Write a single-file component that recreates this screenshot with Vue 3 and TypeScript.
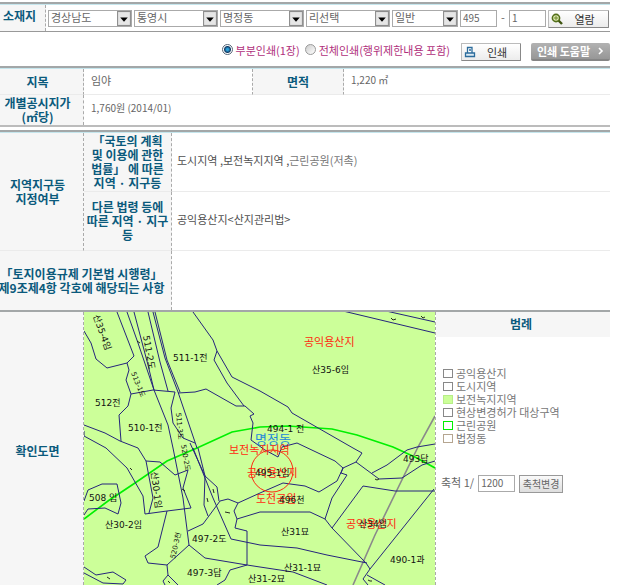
<script setup lang="ts">
import { ref } from 'vue'

interface MapLabel {
  text: string
  x: number
  y: number
  kind: 'lot' | 'zone' | 'district' | 'tiny'
  turn?: number
}

const regions = [
  { id: 'province', name: '시도', value: '경상남도' },
  { id: 'city', name: '시군구', value: '통영시' },
  { id: 'town', name: '읍면동', value: '명정동' },
  { id: 'village', name: '리', value: '리선택' },
  { id: 'kind', name: '구분', value: '일반' },
]

const mainNo = ref('495')
const subNo = ref('1')
const printMode = ref('part')
const scale = ref('1200')

const legend = [
  { name: '공익용산지', tone: 'plain' },
  { name: '도시지역', tone: 'plain' },
  { name: '보전녹지지역', tone: 'green-fill' },
  { name: '현상변경허가 대상구역', tone: 'plain' },
  { name: '근린공원', tone: 'green-line' },
  { name: '법정동', tone: 'tan-line' },
]

const parcels = [
  'M84 331L91 343L96 359L107 368L127 363L134 356L117 312',
  'M127 312L138 343L154 390L168 425L173 448L183 498L189 545L167 565L148 563L145 556L158 547L167 511',
  'M134 312L148 365L154 390',
  'M148 312L160 362L168 391',
  'M153 312L165 358L178 392L197 448',
  'M155 312L167 360L180 392',
  'M131 394L153 390L175 392L171 408L173 423L183 438L195 443',
  'M178 393L195 392L206 389L236 406L245 406L254 414L250 416L253 423L251 440L265 450L278 457L282 447L297 443L335 461L343 468L337 481L319 492L305 486L283 483L260 493L238 503L228 499L220 501L203 524L188 531',
  'M127 363L129 370L126 380L131 394L128 406L119 415L121 441',
  'M84 425L105 433L120 441L138 448L146 461L153 498L149 513',
  'M84 431L84 436L106 448L127 468L143 496L145 514L167 511L191 508L183 488L188 470L175 475L160 462L146 461',
  'M189 545L205 558L247 565L260 567L293 572L327 585',
  'M167 565L168 575L178 585M168 575L163 581L165 585',
  'M238 503L234 511L237 519L235 528L247 531L247 565L230 570L225 580L217 585',
  'M193 448L213 498L231 539L260 545L297 548L327 555L367 563',
  'M190 443L205 476L217 487L219 501M198 448L205 476L204 505L208 516',
  'M237 519L260 512L310 512L325 519L332 528L366 563L370 569L434 489',
  'M325 519L332 498L347 475L341 473L343 468L356 462L362 453L353 448L292 413L288 407L260 391L232 377L217 351L213 340L193 312',
  'M332 528L363 486L395 491L435 491',
  'M356 462L379 479L402 478L422 465L435 461',
  'M372 473L387 465L407 450L417 447L435 444',
  'M370 569L363 579L368 585M367 575L385 585',
  'M343 311L435 333M386 311L435 322',
  'M217 351L214 360L227 383L244 406',
  'M84 501L88 490L102 484L117 484L121 503L118 514L105 508L88 509L84 515',
  'M84 567L96 575L113 572L126 580L123 584L103 583L84 573',
]

const ticks =
  'M391 318l2 2l3-1M421 316l2 2l2-1M375 479l2 1l2-1M130 468l2 2M213 489l1 4M207 498l1 4M225 512l5 1M107 577l3 2M168 581l2 2M368 580l2 1l2 0M182 489l3 2M137 341l3 2'

const labels: MapLabel[] = [
  { text: '산35-4임', x: 93, y: 316, kind: 'lot', turn: 70 },
  { text: '511-2도', x: 143, y: 336, kind: 'lot', turn: 80 },
  { text: '513-1도', x: 131, y: 373, kind: 'tiny', turn: 68 },
  { text: '511-3도', x: 176, y: 413, kind: 'tiny', turn: 85 },
  { text: '520-2도', x: 181, y: 445, kind: 'tiny', turn: 80 },
  { text: '511-1전', x: 173, y: 361, kind: 'lot' },
  { text: '512전', x: 95, y: 406, kind: 'lot' },
  { text: '510-1전', x: 128, y: 431, kind: 'lot' },
  { text: '508 임', x: 89, y: 501, kind: 'lot' },
  { text: '산30-2임', x: 105, y: 528, kind: 'lot' },
  { text: '산30-1임', x: 151, y: 472, kind: 'lot', turn: 83 },
  { text: '520-3천', x: 175, y: 559, kind: 'tiny', turn: -77 },
  { text: '497-2도', x: 192, y: 542, kind: 'lot' },
  { text: '497-3답', x: 187, y: 576, kind: 'lot' },
  { text: '산35-6임', x: 312, y: 373, kind: 'lot' },
  { text: '공익용산지', x: 304, y: 346, kind: 'zone' },
  { text: '명정동', x: 255, y: 444, kind: 'district' },
  { text: '보전녹지지역', x: 229, y: 454, kind: 'zone' },
  { text: '494-1 전', x: 267, y: 432, kind: 'lot' },
  { text: '공익용산지', x: 247, y: 477, kind: 'zone' },
  { text: '495-1임', x: 255, y: 476, kind: 'lot' },
  { text: '도천공원', x: 256, y: 503, kind: 'zone' },
  { text: '496천', x: 279, y: 503, kind: 'lot' },
  { text: '공익용산지', x: 346, y: 528, kind: 'zone' },
  { text: '산34임', x: 359, y: 527, kind: 'lot' },
  { text: '산31묘', x: 281, y: 535, kind: 'lot' },
  { text: '산31-1묘', x: 284, y: 571, kind: 'lot' },
  { text: '산31-2묘', x: 248, y: 582, kind: 'lot' },
  { text: '493답', x: 403, y: 462, kind: 'lot' },
  { text: '490-1과', x: 390, y: 563, kind: 'lot' },
]

function turnOf(l: MapLabel): string | undefined {
  return l.turn ? `rotate(${l.turn} ${l.x} ${l.y})` : undefined
}
</script>

<template>
  <div class="viewport">
    <main class="page">
      <form class="search ruled" @submit.prevent>
        <div class="search-row">
          <div class="search-title">소재지</div>
          <div class="fields">
            <span v-for="r in regions" :key="r.id" class="picker" :class="{ narrow: r.id === 'kind' }">
              <select :id="r.id" :aria-label="r.name">
                <option>{{ r.value }}</option>
              </select>
              <svg class="arrow" viewBox="0 0 13 14" aria-hidden="true">
                <rect x="0.5" y="0.5" width="12" height="13" fill="#e6e6e6" stroke="#8c8c8c" />
                <path d="M3 6h7l-3.5 4z" fill="#000" />
              </svg>
            </span>
            <input v-model="mainNo" class="number" aria-label="본번" />
            <span class="dash">-</span>
            <input v-model="subNo" class="number" aria-label="부번" />
            <button type="submit" class="tool">
              <svg viewBox="0 0 12 12" aria-hidden="true">
                <path d="M7 7l4 4" stroke="#3f5410" stroke-width="2.4" />
                <circle cx="5" cy="5" r="3.6" fill="#dfe9b4" stroke="#54701a" stroke-width="1.6" />
                <path d="M3 5h4M5 3v4" stroke="#6d8a2b" />
              </svg>
              <span>열람</span>
            </button>
          </div>
        </div>
      </form>

      <div class="print">
        <label class="mode"><input v-model="printMode" type="radio" name="mode" value="part" />부분인쇄(1장)</label>
        <label class="mode"><input v-model="printMode" type="radio" name="mode" value="all" />전체인쇄(행위제한내용 포함)</label>
        <button type="button" class="tool print-button">
          <svg viewBox="0 0 12 12" aria-hidden="true">
            <path d="M3.500 7V1.500h4.500V7M5 4h2" fill="#fff" stroke="#2c6c9c" stroke-width="1.3" />
            <path d="M1.500 7h9v3.500h-9z" fill="#dcebf5" stroke="#2c6c9c" stroke-width="1.3" />
          </svg>
          <span>인쇄</span>
        </button>
        <button type="button" class="help">
          <span>인쇄 도움말</span>
          <svg viewBox="0 0 6 8" aria-hidden="true"><path d="M1 1l3 3l-3 3" fill="none" stroke="#fff" stroke-width="1.6" /></svg>
        </button>
      </div>

      <div class="ruled closed">
        <table class="summary">
          <colgroup><col class="c-head" /><col class="c-land" /><col class="c-area" /><col /></colgroup>
          <tbody>
            <tr>
              <th scope="row">지목</th>
              <td class="dotted raised">임야</td>
              <th scope="row">면적</th>
              <td class="figure raised">1,220 ㎡</td>
            </tr>
            <tr class="last tall">
              <th scope="row">개별공시지가<br />(㎡당)</th>
              <td class="figure raised" colspan="3">1,760원 (2014/01)</td>
            </tr>
          </tbody>
        </table>
      </div>

      <div class="ruled zones-wrap">
        <table class="zones">
          <colgroup><col class="c-head" /><col class="c-law" /><col /></colgroup>
          <tbody>
            <tr class="law-row">
              <th scope="rowgroup" rowspan="2">지역지구등<br />지정여부</th>
              <th scope="row">「국토의 계획<br />및 이용에 관한<br />법률」 에 따른<br />지역 · 지구등</th>
              <td class="raised">도시지역 ,보전녹지지역 ,<span class="soft">근린공원(저촉)</span></td>
            </tr>
            <tr class="law-row">
              <th scope="row">다른 법령 등에<br />따른 지역 · 지구<br />등</th>
              <td class="raised">공익용산지&lt;산지관리법&gt;</td>
            </tr>
            <tr class="law-row last">
              <th scope="row" colspan="2">「토지이용규제 기본법 시행령」<br />제9조제4항 각호에 해당되는 사항</th>
              <td></td>
            </tr>
          </tbody>
        </table>
      </div>

      <section class="drawing">
        <h2 class="drawing-title">확인도면</h2>
        <div class="map">
          <svg viewBox="84 312 351 273" role="img" aria-label="확인도면">
            <rect x="84" y="312" width="351" height="273" fill="#ccff99" />
            <path d="M435 416L418 447L375 535L353 585" fill="none" stroke="#8a8a8a" stroke-width="1.6" />
            <path
              d="M84 519L108 501L135 483L167 461L197 448L232 432L260 427L288 426L332 429L357 435L393 447L417 458L435 468"
              fill="none" stroke="#00f000" stroke-width="1.6" />
            <g fill="none" stroke="#25257c" stroke-width="1">
              <path v-for="(d, i) in parcels" :key="i" :d="d" />
            </g>
            <path :d="ticks" fill="none" stroke="#111" stroke-width="0.9" />
            <circle cx="272" cy="471" r="21" fill="none" stroke="#ff2a10" />
            <text v-for="(l, i) in labels" :key="i" :x="l.x" :y="l.y" :class="l.kind" :transform="turnOf(l)">{{ l.text }}</text>
          </svg>
        </div>
        <aside class="side">
          <h2 class="side-title">범례</h2>
          <ul class="legend">
            <li v-for="item in legend" :key="item.name"><i class="swatch" :class="item.tone"></i>{{ item.name }}</li>
          </ul>
          <form class="scale" @submit.prevent>
            <label for="scale">축척 1/</label>
            <input id="scale" v-model="scale" class="number" />
            <button type="submit" class="apply">축척변경</button>
          </form>
        </aside>
      </section>
    </main>
  </div>
</template>

<style>
body {
  background: #fff;
}
</style>

<style scoped>
.viewport {
  overflow: hidden;
}
.page {
  margin-left: -8px;
  padding: 2px 10px 0 0;
  font: 11px/14px "Noto Sans CJK KR", sans-serif;
  color: #666;
}
.page * {
  box-sizing: border-box;
}
button,
input,
select {
  font: inherit;
  color: inherit;
  margin: 0;
}
.ruled {
  border-top: 2px solid #a3a7a8;
}
.closed {
  border-bottom: 2px solid #bcbcbc;
}
.search-row {
  display: flex;
  height: 28px;
  border-top: 1px solid #c5e6ed;
  border-bottom: 1px solid #999;
}
.search-title {
  flex: none;
  width: 54px;
  padding: 4px 0 0 2px;
  background: #f6f6f6;
  border-right: 1px dashed #aaa;
  color: #0b5a7c;
  font-size: 12px;
  font-weight: 700;
  text-align: center;
}
.fields {
  display: flex;
  flex: 1;
  gap: 2px;
  padding: 5px 0 0 2px;
}
.picker {
  display: flex;
  position: relative;
  width: 84px;
  height: 17px;
}
.picker.narrow {
  width: 66px;
}
.picker select {
  appearance: none;
  width: 100%;
  padding: 0 14px 3px 2px;
  border: 1px solid #aaa;
  border-radius: 0;
  background: #fff;
  line-height: 12px;
}
.arrow {
  position: absolute;
  top: 1px;
  right: 1px;
  width: 14px;
  height: 15px;
  pointer-events: none;
}
.number {
  width: 37px;
  height: 17px;
  padding: 0 2px 3px;
  border: 1px solid #aaa;
  border-radius: 0;
  background: #fff;
  font-size: 10px;
  line-height: 12px;
}
.dash {
  width: 8px;
  text-align: center;
}
.tool {
  display: flex;
  align-items: center;
  width: 61px;
  height: 18px;
  padding: 0 2px;
  border: 1px solid #bbb;
  border-right-color: #888;
  border-bottom-color: #888;
  border-radius: 1px;
  background: linear-gradient(#fff, #ececec);
  color: #333;
}
.tool svg {
  width: 12px;
  height: 12px;
}
.tool span {
  flex: 1;
  text-align: center;
}
.print {
  display: flex;
  justify-content: flex-end;
  height: 34px;
  padding-top: 11px;
}
.mode {
  display: flex;
  align-items: center;
  gap: 3px;
  height: 13px;
  margin-right: 5px;
  color: #b0307c;
}
.mode input {
  appearance: none;
  width: 11px;
  height: 11px;
  border: 1px solid #999;
  border-radius: 50%;
  background: linear-gradient(135deg, #ccc, #fff);
}
.mode input:checked {
  border-color: #567;
  background: radial-gradient(circle, #2aa0d8 0 1px, #123c66 3px, #fff 4px);
}
.print-button {
  width: 60px;
  margin: 0 10px 0 6px;
}
.help {
  display: flex;
  align-items: center;
  justify-content: center;
  gap: 8px;
  width: 79px;
  height: 18px;
  padding: 0;
  border: 0;
  border-bottom: 2px solid #858585;
  border-radius: 2px;
  background: linear-gradient(#b2b2b2, #979797);
  color: #fff;
  font-weight: 700;
}
.help svg {
  width: 6px;
  height: 8px;
}
table {
  width: 100%;
  border-top: 1px solid #c5e6ed;
  border-spacing: 0;
  table-layout: fixed;
}
.c-head {
  width: 92px;
}
.c-land {
  width: 169px;
}
.c-area {
  width: 91px;
}
.c-law {
  width: 88px;
}
th,
td {
  height: 26px;
  padding: 0;
  border-bottom: 1px solid #ebebeb;
}
th {
  background: #f6f6f6;
  border-right: 1px dashed #aaa;
  color: #0b5a7c;
  font-size: 12px;
  line-height: 14px;
  white-space: nowrap;
}
td {
  padding-left: 7px;
}
.raised {
  padding-bottom: 4px;
}
.last th,
.last td {
  border-bottom: 0;
}
.tall th,
.tall td {
  height: 30px;
}
.dotted {
  border-right: 1px dashed #aaa;
}
.figure {
  font-size: 10px;
}
.zones-wrap {
  margin-top: 3px;
}
.zones th,
.zones td {
  height: 59px;
}
.zones td {
  padding-left: 5px;
  color: #505050;
}
.zones .soft {
  color: #777;
}
.drawing {
  display: grid;
  grid-template-columns: 92px 352px minmax(0, 1fr);
  border-top: 2px solid #a3a7a8;
}
.drawing-title,
.side-title {
  margin: 0;
  background: #f6f6f6;
  color: #0b5a7c;
  font-size: 12px;
  line-height: 14px;
  text-align: center;
}
.drawing-title {
  display: flex;
  align-items: center;
  justify-content: center;
  padding-top: 4px;
  border-right: 1px dashed #aaa;
}
.map {
  border-right: 1px dashed #aaa;
}
.map svg {
  display: block;
  width: 100%;
}
.lot,
.tiny {
  fill: #111;
  font: 9px "DejaVu Sans", "Noto Sans CJK KR", sans-serif;
}
.tiny {
  font-size: 7px;
}
.zone {
  fill: #ff2a10;
  font-size: 11px;
}
.district {
  fill: #2389d8;
  font-size: 13px;
}
.side-title {
  padding: 5px 4px 6px 0;
}
.legend {
  margin: 0;
  padding: 30px 0 0 7px;
  list-style: none;
  color: #777;
}
.legend li {
  display: flex;
  align-items: center;
  gap: 3px;
  height: 13px;
  line-height: 13px;
}
.swatch {
  width: 10px;
  height: 9px;
  border: 1px solid #888;
}
.green-fill {
  border-color: #b8ee88;
  background: #ccff99;
}
.green-line {
  border-color: #00f000;
}
.tan-line {
  border-color: #b5a590;
}
.scale {
  display: flex;
  gap: 4px;
  padding: 30px 0 0 5px;
}
.apply {
  width: 44px;
  height: 18px;
  padding: 0;
  border: 1px solid #999;
  border-radius: 0;
  background: linear-gradient(#fafafa, #dedede);
  font-size: 10px;
  line-height: 14px;
}
</style>
